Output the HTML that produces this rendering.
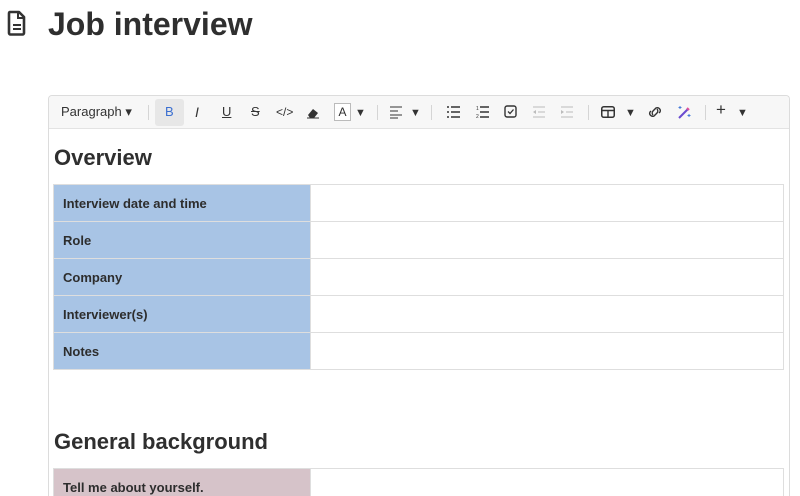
<!DOCTYPE html>
<html><head><meta charset="utf-8"><style>
*{margin:0;padding:0;box-sizing:border-box}
html,body{width:800px;height:496px;overflow:hidden}
body{background:#fff;font-family:"Liberation Sans",sans-serif;color:#2d2d2d;position:relative}
.abs{position:absolute}
h1{position:absolute;left:48px;top:4px;font-size:32px;font-weight:bold;line-height:40px;color:#2f2f2f}
.editor{position:absolute;left:48px;top:95px;width:742px;height:401px;border:1px solid #dcdcdc;border-bottom:none;border-radius:4px 4px 0 0}
.tb{position:absolute;left:0;top:0;width:100%;height:33px;background:#f7f7f7;border-bottom:1px solid #e3e3e3;border-radius:4px 4px 0 0}
.ti{position:absolute;top:8px;font-size:13px;color:#333;line-height:16px}
.dd{position:absolute;top:10px;font-size:11px;color:#333;line-height:14px}
.sep{position:absolute;top:9px;width:1px;height:15px;background:#d5d5d5}
.ic{position:absolute;top:9px}
h2{position:absolute;left:54px;font-size:22px;font-weight:bold;color:#2f2f2f;line-height:28px}
table{position:absolute;left:53px;width:731px;border-collapse:collapse}
td{border:1px solid #dedede;height:37px;font-size:13px;font-weight:bold;padding-left:9px;color:#2d2d2d}
td.k{width:257px;background:#a8c4e5}
td.p{background:#d6c3c9}
</style></head><body>
<svg class="abs" style="left:7px;top:10px" width="20" height="26" viewBox="0 0 20 26"><path d="M3 2h9l5 5v16a1.5 1.5 0 0 1-1.5 1.5h-12A1.5 1.5 0 0 1 2 23V3.5A1.5 1.5 0 0 1 3 2z" fill="none" stroke="#333" stroke-width="2.6" stroke-linejoin="round"/><path d="M11 2v6h6" fill="none" stroke="#333" stroke-width="2"/><path d="M6 15h8M6 19h8" stroke="#333" stroke-width="2"/></svg>
<h1>Job interview</h1>
<div class="editor"><div class="tb">
<span class="ti" style="left:12px">Paragraph ▾</span>
<div class="sep" style="left:99px"></div>
<div class="abs" style="left:106px;top:3px;width:29px;height:27px;background:#e7e7e7;border-radius:3px"></div>
<span class="ti" style="left:116px;color:#3b6fd0">B</span>
<span class="ti" style="left:146px;font-style:italic;font-size:14px">I</span>
<span class="ti" style="left:173px;text-decoration:underline">U</span>
<span class="ti" style="left:202px;text-decoration:line-through">S</span>
<span class="ti" style="left:227px;font-size:12px">&lt;/&gt;</span>
<svg class="abs" style="left:257px;top:10px" width="14" height="14"><path d="M2 9l5-6 5 4-4 5H4z" fill="#333"/><path d="M1 12h12" stroke="#333"/></svg>
<div class="abs" style="left:285px;top:7px;width:17px;height:18px;border:1px solid #bbb;background:#fff;font-size:12px;text-align:center;line-height:16px">A</div>
<span class="dd" style="left:306px">▼</span>
<div class="sep" style="left:328px"></div>
<svg class="ic" style="left:341px" width="12" height="14"><path d="M0 2h12M0 6h8M0 10h12M0 13h8" stroke="#333"/></svg>
<span class="dd" style="left:361px">▼</span>
<div class="sep" style="left:382px"></div>
<svg class="ic" style="left:398px" width="13" height="14"><path d="M0 2h2M0 7h2M0 12h2M4 2h9M4 7h9M4 12h9" stroke="#333" stroke-width="1.4"/></svg>
<svg class="ic" style="left:427px" width="13" height="14"><path d="M4 2h9M4 7h9M4 12h9" stroke="#333" stroke-width="1.4"/><text x="0" y="5" font-size="5" fill="#333">1</text><text x="0" y="13" font-size="5" fill="#333">2</text></svg>
<svg class="ic" style="left:455px;top:9px" width="13" height="13"><rect x="1" y="1" width="11" height="11" rx="2" fill="none" stroke="#333" stroke-width="1.4"/><path d="M4 6.5l2 2 3.5-4" fill="none" stroke="#333" stroke-width="1.3"/></svg>
<svg class="ic" style="left:484px" width="12" height="14"><path d="M0 2h12M5 7h7M0 12h12" stroke="#bbb"/><path d="M3 5l-3 2 3 2z" fill="#bbb"/></svg>
<svg class="ic" style="left:512px" width="12" height="14"><path d="M0 2h12M5 7h7M0 12h12" stroke="#bbb"/><path d="M0 5l3 2-3 2z" fill="#bbb"/></svg>
<div class="sep" style="left:539px"></div>
<svg class="ic" style="left:552px;top:10px" width="14" height="12"><rect x="0.75" y="0.75" width="12.5" height="10.5" rx="2" fill="none" stroke="#333" stroke-width="1.5"/><path d="M0 4.5h14M7 4.5V12" stroke="#333" stroke-width="1.4"/></svg>
<span class="dd" style="left:576px">▼</span>
<svg class="ic" style="left:598px;top:9px" width="16" height="14"><path d="M6 10a3 3 0 0 1 0-4l3-3a3 3 0 0 1 4 4l-1 1M10 4a3 3 0 0 1 0 4l-3 3a3 3 0 0 1-4-4l1-1" fill="none" stroke="#333" stroke-width="1.4"/></svg>
<svg class="ic" style="left:627px;top:8px" width="16" height="16"><path d="M3 14l9-9" stroke="#6a4bd0" stroke-width="2"/><path d="M11 4l2 2" stroke="#e0509a" stroke-width="2"/><path d="M4 2v3M2.5 3.5h3M13 10v3M11.5 11.5h3" stroke="#4a7cd8"/></svg>
<div class="sep" style="left:656px"></div>
<span class="ti" style="left:667px;font-size:17px;top:6px">+</span>
<span class="dd" style="left:688px">▼</span>
</div></div>
<h2 style="top:144px">Overview</h2>
<table style="top:184px">
<tr><td class="k">Interview date and time</td><td></td></tr>
<tr><td class="k">Role</td><td></td></tr>
<tr><td class="k">Company</td><td></td></tr>
<tr><td class="k">Interviewer(s)</td><td></td></tr>
<tr><td class="k">Notes</td><td></td></tr>
</table>
<h2 style="top:428px">General background</h2>
<div class="abs" style="left:53px;top:468px;width:731px;height:28px;overflow:hidden">
<table style="left:0;top:0">
<tr><td class="k p">Tell me about yourself.</td><td></td></tr>
</table></div>
</body></html>
